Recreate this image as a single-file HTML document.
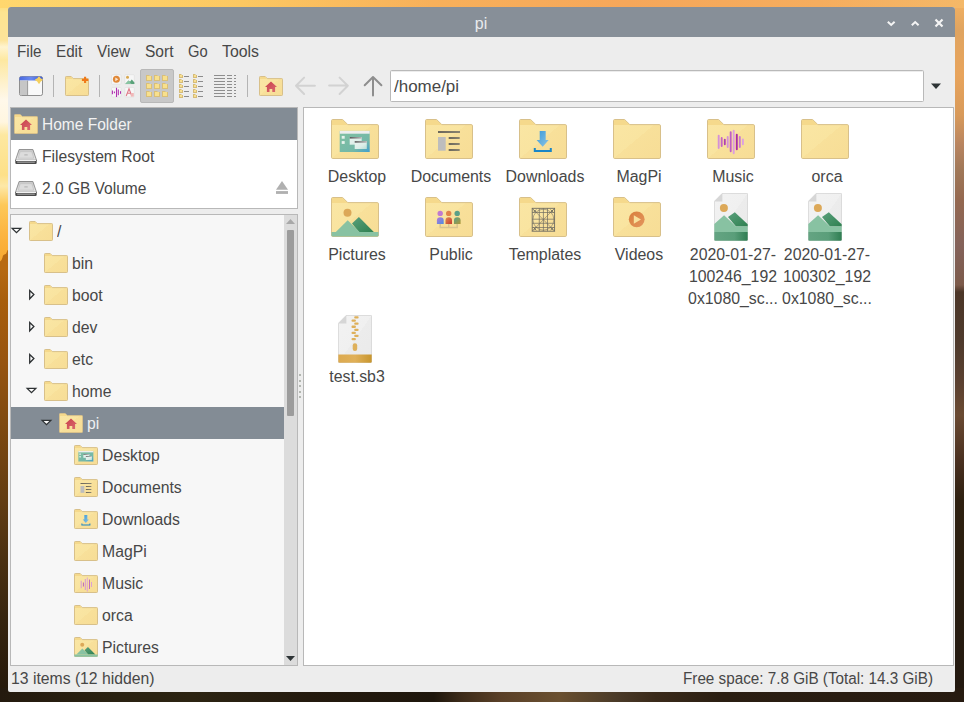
<!DOCTYPE html>
<html><head><meta charset="utf-8">
<style>
*{margin:0;padding:0;box-sizing:border-box}
html,body{width:964px;height:702px;overflow:hidden}
body{position:relative;font-family:"Liberation Sans",sans-serif;color:#2f2f2f;background:#2a1c0e}
.abs{position:absolute}
.t{position:absolute;white-space:nowrap;line-height:1}
svg{position:absolute;overflow:visible}

</style></head><body>
<svg width="0" height="0" style="position:absolute;left:0;top:0">
<defs>
<linearGradient id="gFold" x1="0" y1="0" x2="1" y2="1"><stop offset="0" stop-color="#fae6a4"/><stop offset="0.5" stop-color="#f9e4a0"/><stop offset="0.5" stop-color="#f8e09a"/><stop offset="1" stop-color="#f7dd96"/></linearGradient>
<linearGradient id="gTeal" x1="0" y1="0" x2="1" y2="1"><stop offset="0" stop-color="#80c0a2"/><stop offset="0.7" stop-color="#74b8a8"/><stop offset="1" stop-color="#3f9ed0"/></linearGradient>
<linearGradient id="gWin" x1="0" y1="0" x2="1" y2="1"><stop offset="0" stop-color="#eaf4f0"/><stop offset="0.6" stop-color="#dceee8"/><stop offset="1" stop-color="#b8dcd4"/></linearGradient>
<linearGradient id="gBar" x1="0" y1="0" x2="1" y2="0"><stop offset="0" stop-color="#5a5a5a"/><stop offset="1" stop-color="#b8b8b8"/></linearGradient>
<linearGradient id="gDocLine" x1="0" y1="0" x2="1" y2="0"><stop offset="0" stop-color="#6a665a"/><stop offset="1" stop-color="#8a8470"/></linearGradient>
<linearGradient id="gArrow" x1="0" y1="0" x2="1" y2="1"><stop offset="0" stop-color="#3c9ad8"/><stop offset="1" stop-color="#8cc4e4"/></linearGradient>
<linearGradient id="gP1" x1="0" y1="0" x2="1" y2="1"><stop offset="0" stop-color="#b878d8"/><stop offset="1" stop-color="#4a8ee0"/></linearGradient>
<linearGradient id="gP2" x1="0" y1="0" x2="1" y2="1"><stop offset="0" stop-color="#e08a50"/><stop offset="1" stop-color="#c83a30"/></linearGradient>
<linearGradient id="gP3" x1="0" y1="0" x2="1" y2="1"><stop offset="0" stop-color="#58a088"/><stop offset="1" stop-color="#b09838"/></linearGradient>
<linearGradient id="gVid" x1="0" y1="0" x2="1" y2="1"><stop offset="0" stop-color="#d87e3c"/><stop offset="1" stop-color="#e4965e"/></linearGradient>
<linearGradient id="gMtn" x1="0" y1="0" x2="1" y2="1"><stop offset="0" stop-color="#5aa07c"/><stop offset="1" stop-color="#2e8050"/></linearGradient>
<linearGradient id="gImgBand" x1="0" y1="0" x2="1" y2="0"><stop offset="0" stop-color="#64a482"/><stop offset="0.6" stop-color="#5a9e7a"/><stop offset="1" stop-color="#2f7e52"/></linearGradient>
<linearGradient id="gZipBand" x1="0" y1="0" x2="1" y2="0"><stop offset="0" stop-color="#dcaa50"/><stop offset="0.5" stop-color="#e0b058"/><stop offset="1" stop-color="#c8962e"/></linearGradient>
<linearGradient id="gPage" x1="0" y1="0" x2="1" y2="1"><stop offset="0" stop-color="#f2f2f2"/><stop offset="0.5" stop-color="#f0f0f0"/><stop offset="0.5" stop-color="#ececec"/><stop offset="1" stop-color="#eaeaea"/></linearGradient>
<linearGradient id="gHdr" x1="0" y1="0" x2="1" y2="0"><stop offset="0" stop-color="#4a6ae0"/><stop offset="0.5" stop-color="#6a8af0"/><stop offset="1" stop-color="#3c5cd8"/></linearGradient>
<linearGradient id="gHouse" x1="0" y1="0" x2="1" y2="1"><stop offset="0" stop-color="#c8404a"/><stop offset="1" stop-color="#dc6a70"/></linearGradient>
<linearGradient id="gDrvTop" x1="0" y1="0" x2="0" y2="1"><stop offset="0" stop-color="#c8c8c8"/><stop offset="1" stop-color="#e8e8e8"/></linearGradient>

<symbol id="folder" viewBox="0 0 48 40">
 <path d="M0.5,1.8 Q0.5,0.5 1.8,0.5 L11.6,0.5 L16.8,5.6 L46.2,5.6 Q47.5,5.6 47.5,6.9 L47.5,38.2 Q47.5,39.5 46.2,39.5 L1.8,39.5 Q0.5,39.5 0.5,38.2 Z" fill="url(#gFold)" stroke="#d8c08a" stroke-width="1"/>
 <path d="M1,1.8 Q1,1 1.8,1 L11.4,1 L16.5,6 L1,6 Z" fill="#f5d98c"/>
</symbol>
<symbol id="folderS" viewBox="0 0 24 20">
 <path d="M0.5,1.2 Q0.5,0.5 1.2,0.5 L6.2,0.5 L8.2,2.6 L22.8,2.6 Q23.5,2.6 23.5,3.3 L23.5,18.8 Q23.5,19.5 22.8,19.5 L1.2,19.5 Q0.5,19.5 0.5,18.8 Z" fill="url(#gFold)" stroke="#d8c08a" stroke-width="1"/>
 <path d="M1,1.2 Q1,1 1.2,1 L6,1 L8,3 L1,3 Z" fill="#f5d98c"/>
</symbol>

<symbol id="ovDesktop" viewBox="0 0 48 40">
 <rect x="8.7" y="11.9" width="30" height="21.1" fill="url(#gTeal)"/>
 <rect x="8.7" y="11.9" width="30" height="2.8" fill="#eeeeee"/>
 <rect x="10.7" y="16.9" width="3" height="2.8" fill="#e6f2ec"/>
 <rect x="10.7" y="22.1" width="3" height="2.8" fill="#e6f2ec"/>
 <rect x="18.7" y="18" width="12" height="7.7" fill="url(#gWin)"/>
 <rect x="18.7" y="18" width="12" height="1.6" fill="url(#gBar)"/>
 <rect x="23.7" y="22.1" width="12.1" height="7.9" fill="url(#gWin)"/>
 <rect x="23.7" y="22.1" width="12.1" height="1.6" fill="url(#gBar)"/>
</symbol>
<symbol id="ovDocuments" viewBox="0 0 48 40">
 <rect x="13" y="12" width="22" height="2" fill="url(#gDocLine)"/>
 <rect x="13" y="18" width="7.7" height="13.7" fill="#bdbdbd"/>
 <rect x="23.7" y="18" width="11" height="2" fill="url(#gDocLine)"/>
 <rect x="23.7" y="24" width="11" height="2" fill="url(#gDocLine)"/>
 <rect x="23.7" y="30" width="11" height="2" fill="url(#gDocLine)"/>
</symbol>
<symbol id="ovDownloads" viewBox="0 0 48 40">
 <path d="M20.7,11.9 H26.7 V21 H29.7 L23.7,27.8 L17.6,21 H20.7 Z" fill="url(#gArrow)"/>
 <path d="M14.8,29 H16.8 V31 H30.8 V29 H32.8 V33 H14.8 Z" fill="#1a86c6"/>
</symbol>
<symbol id="ovMusic" viewBox="0 0 48 40">
 <g stroke-width="1.9" stroke-linecap="round">
 <line x1="11.7" y1="16.8" x2="11.7" y2="29.1" stroke="#d490d8"/>
 <line x1="14.7" y1="19" x2="14.7" y2="27" stroke="#c464c4"/>
 <line x1="17.8" y1="20.8" x2="17.8" y2="25.3" stroke="#b040b0"/>
 <line x1="20.7" y1="18" x2="20.7" y2="28.1" stroke="#d490d8"/>
 <line x1="23.7" y1="13.1" x2="23.7" y2="32.3" stroke="#c060c4"/>
 <line x1="26.7" y1="11.8" x2="26.7" y2="34.2" stroke="#dc9ce0"/>
 <line x1="29.8" y1="15.8" x2="29.8" y2="30.2" stroke="#a82ca8"/>
 <line x1="32.8" y1="18" x2="32.8" y2="28.1" stroke="#c878d0"/>
 <line x1="35.9" y1="20.4" x2="35.9" y2="25.3" stroke="#dca0e0"/>
 </g>
</symbol>
<symbol id="ovMusicS" viewBox="0 0 24 20">
 <g stroke-width="0.9">
 <line x1="7.2" y1="7.8" x2="7.2" y2="15.2" stroke="#d494dc"/>
 <line x1="9.4" y1="9.5" x2="9.4" y2="13.5" stroke="#b454bc"/>
 <line x1="11.3" y1="6" x2="11.3" y2="17" stroke="#d090d8"/>
 <line x1="13.3" y1="4.5" x2="13.3" y2="18.5" stroke="#dc9ce0"/>
 <line x1="15.5" y1="6.5" x2="15.5" y2="16" stroke="#b860c0"/>
 <line x1="17.5" y1="9" x2="17.5" y2="14" stroke="#d898dc"/>
 </g>
</symbol>
<symbol id="ovPublic" viewBox="0 0 48 40">
 <path d="M15.2,26.5 V30.6 H32.2 V26.5 M23.7,26.5 V30.6" fill="none" stroke="#d9c490" stroke-width="1.5"/>
 <circle cx="15.2" cy="16.4" r="2.7" fill="#c07ad0"/>
 <circle cx="23.7" cy="16.4" r="2.7" fill="#e0844a"/>
 <circle cx="32.2" cy="16.4" r="2.7" fill="#5aa088"/>
 <path d="M11.9,27 V23.5 Q11.9,20.3 15.3,20.3 Q18.7,20.3 18.7,23.5 V27 Z" fill="url(#gP1)"/>
 <path d="M20.5,27 V23.5 Q20.5,20.3 23.75,20.3 Q27,20.3 27,23.5 V27 Z" fill="url(#gP2)"/>
 <path d="M29,27 V23.5 Q29,20.3 32.3,20.3 Q35.6,20.3 35.6,23.5 V27 Z" fill="url(#gP3)"/>
</symbol>
<symbol id="ovTemplates" viewBox="0 0 48 40">
 <g fill="none" stroke="#6e6b62" stroke-width="0.7">
 <rect x="13.2" y="11.3" width="22.4" height="22.9" stroke-width="0.9"/>
 <path d="M20.3,11.3 V34.2 M24.4,11.3 V34.2 M28.5,11.3 V34.2"/>
 <path d="M13.2,15.5 H35.6 M13.2,22.2 H35.6 M13.2,26.3 H35.6 M13.2,30.5 H35.6"/>
 <path d="M13.2,11.3 L35.6,34.2 M35.6,11.3 L13.2,34.2" stroke-width="0.55"/>
 <circle cx="24.4" cy="22.7" r="10.5" stroke-width="0.55"/>
 </g>
 <g stroke="#66645a" stroke-width="0.8"><path d="M14.3,12.5 L17.3,15.5 M17.3,12.5 L14.3,15.5 M31.5,12.5 L34.5,15.5 M34.5,12.5 L31.5,15.5 M14.3,30.3 L17.3,33.3 M17.3,30.3 L14.3,33.3 M31.5,30.3 L34.5,33.3 M34.5,30.3 L31.5,33.3"/></g>
</symbol>
<symbol id="ovVideos" viewBox="0 0 48 40">
 <circle cx="23.7" cy="22.3" r="7.9" fill="url(#gVid)"/>
 <path d="M20.8,18.2 L28,22.5 L20.8,26.8 Z" fill="#f8e09c"/>
</symbol>
<symbol id="ovPictures" viewBox="0 0 48 40">
 <circle cx="16.5" cy="15.7" r="4" fill="#dca858"/>
 <path d="M21,26.5 L27.9,20 L42.8,35 L28,35 Z" fill="url(#gMtn)"/>
 <path d="M4.8,35 L16.7,23.2 L28.6,35 Z" fill="#88c2a2"/>
 <path d="M0.5,35 H47.5 V38.2 Q47.5,39.5 46.2,39.5 H1.8 Q0.5,39.5 0.5,38.2 Z" fill="#88c2a2"/>
</symbol>
<symbol id="ovHouse" viewBox="0 0 24 20">
 <path d="M12,5.6 L18,10.9 H16.1 V16 H13.3 V13 H10.5 V16 H7.9 V10.9 H6 Z" fill="url(#gHouse)"/>
</symbol>

<symbol id="imgfile" viewBox="0 0 34 48">
 <path d="M8.4,0.3 H32.5 Q33.7,0.3 33.7,1.5 V46.5 Q33.7,47.7 32.5,47.7 H1.5 Q0.3,47.7 0.3,46.5 V8.4 Z" fill="url(#gPage)" stroke="#cacaca" stroke-width="0.7"/>
 <path d="M8.4,0.3 V8.4 H0.3 Z" fill="#d6d6d6"/>
 <circle cx="9.9" cy="15" r="4" fill="#dca858"/>
 <path d="M14,24 L20.8,19.2 L33.7,31.2 V33.5 H22 Z" fill="url(#gMtn)"/>
 <path d="M0.3,31 L10.1,22.2 L22,33.5 H33.7 V39 H0.3 Z" fill="#88c2a2"/>
 <path d="M0.3,38.9 H33.7 V46.5 Q33.7,47.7 32.5,47.7 H1.5 Q0.3,47.7 0.3,46.5 Z" fill="url(#gImgBand)"/>
</symbol>
<symbol id="zipfile" viewBox="0 0 34 48">
 <path d="M8.4,0.3 H32.5 Q33.7,0.3 33.7,1.5 V46.5 Q33.7,47.7 32.5,47.7 H1.5 Q0.3,47.7 0.3,46.5 V8.4 Z" fill="url(#gPage)" stroke="#cacaca" stroke-width="0.7"/>
 <path d="M8.4,0.3 V8.4 H0.3 Z" fill="#d6d6d6"/>
 <g fill="#deb05a"><rect x="16.2" y="1.3" width="4.4" height="2.3" rx="1"/><rect x="13.5" y="4.4" width="4.4" height="2.3" rx="1"/><rect x="16.2" y="7.5" width="4.4" height="2.3" rx="1"/><rect x="13.5" y="10.6" width="4.4" height="2.3" rx="1"/><rect x="16.2" y="13.7" width="4.4" height="2.3" rx="1"/><rect x="13.5" y="16.7" width="4.4" height="2.3" rx="1"/><rect x="16.2" y="19.8" width="4.4" height="2.3" rx="1"/><rect x="13.5" y="22.9" width="4.4" height="2.3" rx="1"/><rect x="14.7" y="28.2" width="4.5" height="7.7" rx="2.2"/></g>
 <path d="M0.3,39.4 H33.7 V46.5 Q33.7,47.7 32.5,47.7 H1.5 Q0.3,47.7 0.3,46.5 Z" fill="url(#gZipBand)"/>
</symbol>
<symbol id="drive" viewBox="0 0 22 15">
 <path d="M4.1,0.5 H17.9 L21.5,11.2 H0.5 Z" fill="url(#gDrvTop)" stroke="#808080" stroke-width="0.8"/>
 <path d="M5.2,2.6 H16.8 L18.8,9.2 H3.2 Z" fill="#dcdcdc" stroke="#bcbcbc" stroke-width="0.6"/>
 <rect x="9.3" y="5.4" width="3.4" height="1" fill="#b0b0b0"/>
 <path d="M0.3,11 H21.7 V13.8 Q21.7,15 20.5,15 H1.5 Q0.3,15 0.3,13.8 Z" fill="#4a4a4a"/>
 <rect x="1" y="11" width="20" height="1" fill="#f2f2f2"/>
 <rect x="2.2" y="12.6" width="17.6" height="1.1" fill="#a8a8a8"/>
</symbol>
</defs></svg>
<div class="abs" style="left:0;top:0;width:12px;height:702px;background:linear-gradient(to bottom,#fdd46a 0px,#fde490 12px,#fde49a 40px,#fff4d0 47px,#fde8a0 60px,#fef2d0 85px,#fff8ea 100px,#fff6e0 122px,#fde8a0 135px,#fde088 175px,#fde8a8 186px,#fdc858 205px,#fcb440 235px,#f8a830 262px,#b86a12 263px,#a85e0c 300px,#985410 360px,#804a10 420px,#623c12 500px,#4a3010 560px,#36240e 620px,#2a1c0c 670px,#22180a 702px)"></div>
<svg style="left:0;top:240px" width="9" height="30" viewBox="0 0 9 30"><path d="M9,9.5 Q7,9.5 6.8,12 Q6.5,14 4.5,14.5 Q2.5,15 2.5,17.5 Q2,20 0,21.5 V30 H9 Z" fill="#b86a12"/></svg>
<div class="abs" style="left:952px;top:0;width:12px;height:702px;background:linear-gradient(to bottom,#f4b262 0px,#e0a460 30px,#e8a45c 75px,#d89a5a 115px,#b88460 145px,#a07858 170px,#946850 200px,#84625a 245px,#7c5a4a 285px,#4c3628 292px,#4e3a2c 340px,#5a4030 380px,#6a4a32 415px,#4a3020 460px,#2e2010 500px,#2a1e10 560px,#221810 702px)"></div>
<div class="abs" style="left:0;top:688px;width:964px;height:14px;background:linear-gradient(to right,#241a0e 0%,#2a2212 12%,#2c2412 20%,#241a0e 32%,#1e160c 45%,#3e2c1a 48%,#5a4028 52%,#6a5030 58%,#4a3a28 64%,#3a2a1a 68%,#2a1e12 75%,#261a10 100%)"></div>
<div class="abs" style="left:0;top:0;width:964px;height:8px;background:linear-gradient(to right,#ffd76e 0%,#fcc862 25%,#f8b05a 45%,#f6a75a 65%,#f6ad5e 85%,#f4b868 100%)"></div>
<div class="abs" style="left:8px;top:7px;width:947px;height:685px;background:#ededed;border-radius:3px 3px 2px 2px"></div>
<div class="abs" style="left:8px;top:7px;width:947px;height:30px;background:#878f98;border-radius:3px 3px 0 0"></div>
<div class="t" style="left:281.00px;width:400px;text-align:center;top:16.26px;font-size:16px;color:#e8eaed;transform:scaleX(1.0);transform-origin:50% 0;">pi</div>
<svg style="left:884px;top:17px" width="64" height="14">
<path d="M3.8,4.8 L7.2,8 L10.6,4.8" fill="none" stroke="#f4f4f4" stroke-width="2"/>
<path d="M27.8,8.2 L31.2,5 L34.6,8.2" fill="none" stroke="#f4f4f4" stroke-width="2"/>
<path d="M51.5,2.5 L58.5,9.5 M58.5,2.5 L51.5,9.5" fill="none" stroke="#f4f4f4" stroke-width="2.2"/>
</svg>
<div class="t" style="left:17.20px;top:44.36px;font-size:16px;color:#474747;transform:scaleX(0.95);transform-origin:0 0;">File</div>
<div class="t" style="left:56.20px;top:44.36px;font-size:16px;color:#474747;transform:scaleX(0.95);transform-origin:0 0;">Edit</div>
<div class="t" style="left:96.70px;top:44.36px;font-size:16px;color:#474747;transform:scaleX(0.96);transform-origin:0 0;">View</div>
<div class="t" style="left:144.70px;top:44.36px;font-size:16px;color:#474747;transform:scaleX(0.97);transform-origin:0 0;">Sort</div>
<div class="t" style="left:188.00px;top:44.36px;font-size:16px;color:#474747;transform:scaleX(0.92);transform-origin:0 0;">Go</div>
<div class="t" style="left:221.70px;top:44.36px;font-size:16px;color:#474747;transform:scaleX(0.99);transform-origin:0 0;">Tools</div>
<div class="abs" style="left:53px;top:75px;width:1px;height:22px;background:#b4b4b4"></div>
<div class="abs" style="left:99px;top:75px;width:1px;height:22px;background:#b4b4b4"></div>
<div class="abs" style="left:247px;top:75px;width:1px;height:22px;background:#b4b4b4"></div>
<div class="abs" style="left:140px;top:69px;width:34px;height:34px;background:#c8c8c8;border:1px solid #b8b8b8;border-radius:2px"></div>

<svg style="left:19px;top:76px" width="24" height="20" viewBox="0 0 24 20">
 <rect x="0.5" y="0.5" width="23" height="19" rx="1.8" fill="#f9f9f9" stroke="#8e8e8e" stroke-width="1"/>
 <path d="M0.5,4.6 V2.3 Q0.5,0.5 2.3,0.5 H21.7 Q23.5,0.5 23.5,2.3 V4.6 Z" fill="url(#gHdr)"/>
 <rect x="1" y="4.6" width="7.4" height="14.4" fill="#c6c6c6"/>
 <line x1="8.6" y1="4.6" x2="8.6" y2="19" stroke="#8e8e8e" stroke-width="0.9"/>
 <path d="M20,1.2 Q20.7,3.2 23.2,3.9 Q20.7,4.6 20,7 Q19.3,4.6 16.7,3.9 Q19.3,3.2 20,1.2 Z" fill="#f4d060" stroke="#f4d060" stroke-width="1.5" stroke-linejoin="round"/>
</svg>
<svg style="left:65px;top:76px" width="24" height="20"><use href="#folderS" width="24" height="20"/></svg>
<svg style="left:65px;top:76px" width="24" height="20" viewBox="0 0 24 20">
 <path d="M20.1,0.7 V7.1 M16.9,3.9 H23.3" stroke="#f07818" stroke-width="2.1"/>
</svg>
<svg style="left:111px;top:74px" width="24" height="24" viewBox="0 0 24 24">
 <rect x="0.5" y="0.7" width="9.6" height="9.6" rx="1" fill="#f6f6f6" stroke="#e2e2e2" stroke-width="0.8"/>
 <rect x="13.8" y="0.7" width="9.6" height="9.6" rx="1" fill="#f6f6f6" stroke="#e2e2e2" stroke-width="0.8"/>
 <rect x="0.5" y="13.4" width="9.6" height="9.6" rx="1" fill="#f6f6f6" stroke="#e2e2e2" stroke-width="0.8"/>
 <rect x="13.8" y="13.4" width="9.6" height="9.6" rx="1" fill="#f6f6f6" stroke="#e2e2e2" stroke-width="0.8"/>
 <circle cx="5.4" cy="5.3" r="3.5" fill="#e08838"/>
 <path d="M4.3,3.4 L7.3,5.3 L4.3,7.2 Z" fill="#f8e8d8"/>
 <circle cx="16.5" cy="3.3" r="1.5" fill="#d8a850"/>
 <path d="M14.3,10 L17.5,6.5 L19,7.8 L20.8,5.6 L23.4,8.5 V10 Z" fill="#5aa27a"/>
 <path d="M14.3,10 L17.5,6.5 L20.5,10 Z" fill="#88c4a2"/>
 <g stroke="#b030b0" stroke-width="1.1">
  <line x1="1.4" y1="16.5" x2="1.4" y2="20.2"/><line x1="3.4" y1="17.6" x2="3.4" y2="19.2"/>
  <line x1="5.5" y1="13.8" x2="5.5" y2="23"/><line x1="7.3" y1="15.5" x2="7.3" y2="21.2"/><line x1="9.5" y1="17.2" x2="9.5" y2="19.8"/>
 </g>
 <path d="M15.2,22 L18,14.8 L20.8,22 M16.3,19.2 H19.7" fill="none" stroke="#e07a88" stroke-width="1.1"/>
 <rect x="19.8" y="19" width="3" height="3.6" fill="#f0b8b8"/>
</svg>
<svg style="left:0;top:0" width="964" height="702" viewBox="0 0 964 702"><path d="M146,75 H149 L150,76 H152 V81 H146 Z" fill="#d9bf78"/><rect x="147" y="76" width="4" height="4" fill="#f8e08c"/><path d="M154,75 H157 L158,76 H160 V81 H154 Z" fill="#d9bf78"/><rect x="155" y="76" width="4" height="4" fill="#f8e08c"/><path d="M162,75 H165 L166,76 H168 V81 H162 Z" fill="#d9bf78"/><rect x="163" y="76" width="4" height="4" fill="#f8e08c"/><path d="M146,83 H149 L150,84 H152 V89 H146 Z" fill="#d9bf78"/><rect x="147" y="84" width="4" height="4" fill="#f8e08c"/><path d="M154,83 H157 L158,84 H160 V89 H154 Z" fill="#d9bf78"/><rect x="155" y="84" width="4" height="4" fill="#f8e08c"/><path d="M162,83 H165 L166,84 H168 V89 H162 Z" fill="#d9bf78"/><rect x="163" y="84" width="4" height="4" fill="#f8e08c"/><path d="M146,91 H149 L150,92 H152 V97 H146 Z" fill="#d9bf78"/><rect x="147" y="92" width="4" height="4" fill="#f8e08c"/><path d="M154,91 H157 L158,92 H160 V97 H154 Z" fill="#d9bf78"/><rect x="155" y="92" width="4" height="4" fill="#f8e08c"/><path d="M162,91 H165 L166,92 H168 V97 H162 Z" fill="#d9bf78"/><rect x="163" y="92" width="4" height="4" fill="#f8e08c"/><path d="M179,74 H181 L182,75 H183 V78 H179 Z" fill="#d6bb78"/><rect x="180" y="75" width="2" height="2" fill="#f8e090"/><rect x="184" y="76" width="5" height="1" fill="#8c8c8c"/><path d="M193,74 H195 L196,75 H197 V78 H193 Z" fill="#d6bb78"/><rect x="194" y="75" width="2" height="2" fill="#f8e090"/><rect x="198" y="76" width="5" height="1" fill="#8c8c8c"/><path d="M179,79 H181 L182,80 H183 V83 H179 Z" fill="#d6bb78"/><rect x="180" y="80" width="2" height="2" fill="#f8e090"/><rect x="184" y="81" width="5" height="1" fill="#8c8c8c"/><path d="M193,79 H195 L196,80 H197 V83 H193 Z" fill="#d6bb78"/><rect x="194" y="80" width="2" height="2" fill="#f8e090"/><rect x="198" y="81" width="5" height="1" fill="#8c8c8c"/><path d="M179,84 H181 L182,85 H183 V88 H179 Z" fill="#d6bb78"/><rect x="180" y="85" width="2" height="2" fill="#f8e090"/><rect x="184" y="86" width="5" height="1" fill="#8c8c8c"/><path d="M193,84 H195 L196,85 H197 V88 H193 Z" fill="#d6bb78"/><rect x="194" y="85" width="2" height="2" fill="#f8e090"/><rect x="198" y="86" width="5" height="1" fill="#8c8c8c"/><path d="M179,89 H181 L182,90 H183 V93 H179 Z" fill="#d6bb78"/><rect x="180" y="90" width="2" height="2" fill="#f8e090"/><rect x="184" y="91" width="5" height="1" fill="#8c8c8c"/><path d="M193,89 H195 L196,90 H197 V93 H193 Z" fill="#d6bb78"/><rect x="194" y="90" width="2" height="2" fill="#f8e090"/><rect x="198" y="91" width="5" height="1" fill="#8c8c8c"/><path d="M179,94 H181 L182,95 H183 V98 H179 Z" fill="#d6bb78"/><rect x="180" y="95" width="2" height="2" fill="#f8e090"/><rect x="184" y="96" width="5" height="1" fill="#8c8c8c"/><path d="M193,94 H195 L196,95 H197 V98 H193 Z" fill="#d6bb78"/><rect x="194" y="95" width="2" height="2" fill="#f8e090"/><rect x="198" y="96" width="5" height="1" fill="#8c8c8c"/><rect x="214" y="75" width="11" height="1" fill="#8e8e8e"/><rect x="227" y="75" width="5" height="1" fill="#8e8e8e"/><rect x="234" y="75" width="2" height="1" fill="#8e8e8e"/><rect x="214" y="78" width="11" height="1" fill="#8e8e8e"/><rect x="227" y="78" width="5" height="1" fill="#8e8e8e"/><rect x="234" y="78" width="2" height="1" fill="#8e8e8e"/><rect x="214" y="81" width="11" height="1" fill="#8e8e8e"/><rect x="227" y="81" width="5" height="1" fill="#8e8e8e"/><rect x="234" y="81" width="2" height="1" fill="#8e8e8e"/><rect x="214" y="84" width="11" height="1" fill="#8e8e8e"/><rect x="227" y="84" width="5" height="1" fill="#8e8e8e"/><rect x="234" y="84" width="2" height="1" fill="#8e8e8e"/><rect x="214" y="87" width="11" height="1" fill="#8e8e8e"/><rect x="227" y="87" width="5" height="1" fill="#8e8e8e"/><rect x="234" y="87" width="2" height="1" fill="#8e8e8e"/><rect x="214" y="90" width="11" height="1" fill="#8e8e8e"/><rect x="227" y="90" width="5" height="1" fill="#8e8e8e"/><rect x="234" y="90" width="2" height="1" fill="#8e8e8e"/><rect x="214" y="93" width="11" height="1" fill="#8e8e8e"/><rect x="227" y="93" width="5" height="1" fill="#8e8e8e"/><rect x="234" y="93" width="2" height="1" fill="#8e8e8e"/><rect x="214" y="96" width="11" height="1" fill="#8e8e8e"/><rect x="227" y="96" width="5" height="1" fill="#8e8e8e"/><rect x="234" y="96" width="2" height="1" fill="#8e8e8e"/></svg>

<svg style="left:259px;top:76px" width="24" height="20"><use href="#folderS" width="24" height="20"/><use href="#ovHouse" width="24" height="20"/></svg>
<svg style="left:290px;top:72px" width="100" height="28" viewBox="290 72 100 28">
 <path d="M314.9,85.8 H296.2 M304.1,77.6 L296,85.8 L304.1,94" fill="none" stroke="#d2d2d2" stroke-width="2" stroke-linecap="round" stroke-linejoin="round"/>
 <path d="M329.1,85.6 H347.8 M339.6,77.6 L347.8,85.8 L339.6,94" fill="none" stroke="#d2d2d2" stroke-width="2" stroke-linecap="round" stroke-linejoin="round"/>
 <path d="M373,95.6 V77.2 M364.7,85.3 L373,77 L381.4,85.3" fill="none" stroke="#8e8e8e" stroke-width="2" stroke-linecap="round" stroke-linejoin="round"/>
</svg>

<div class="abs" style="left:390px;top:70px;width:534px;height:32px;background:#fff;border:1px solid #b9b9b9;border-radius:1.5px;box-shadow:inset 0 1px 0 #ececec"></div>
<div class="t" style="left:394.00px;top:78.96px;font-size:16px;color:#474747;transform:scaleX(1.06);transform-origin:0 0;">/home/pi</div>
<svg style="left:930px;top:83px" width="12" height="7"><path d="M1,0.5 L11,0.5 L6,6 Z" fill="#2e3436"/></svg>
<div class="abs" style="left:10px;top:107px;width:288px;height:102px;background:#fff;border:1px solid #b8b8b8"></div>
<div class="abs" style="left:11px;top:108px;width:286px;height:32px;background:#838c95"></div>
<svg style="left:14px;top:114px" width="24" height="20"><use href="#folderS" width="24" height="20"/></svg>
<svg style="left:14px;top:114px" width="24" height="20"><use href="#ovHouse" width="24" height="20"/></svg>
<svg style="left:15px;top:149px" width="22" height="15"><use href="#drive" width="22" height="15"/></svg>
<svg style="left:15px;top:181px" width="22" height="15"><use href="#drive" width="22" height="15"/></svg>
<svg style="left:275px;top:180px" width="14" height="14" viewBox="0 0 14 14"><path d="M7,1 L13,9.7 H1 Z" fill="#b0b0b0"/><rect x="1" y="11.1" width="12" height="2.8" fill="#b0b0b0"/></svg>
<div class="t" style="left:41.60px;top:117.26px;font-size:16px;color:#f2f2f2;transform:scaleX(0.97);transform-origin:0 0;">Home Folder</div>
<div class="t" style="left:41.60px;top:149.16px;font-size:16px;color:#474747;transform:scaleX(0.98);transform-origin:0 0;">Filesystem Root</div>
<div class="t" style="left:41.60px;top:180.86px;font-size:16px;color:#474747;transform:scaleX(0.97);transform-origin:0 0;">2.0 GB Volume</div>
<div class="abs" style="left:10px;top:214px;width:288px;height:452px;background:#f7f7f7;border:1px solid #b8b8b8"></div>
<div class="abs" style="left:284px;top:215px;width:13px;height:450px;background:#dcdcdc"></div>
<div class="abs" style="left:287px;top:230px;width:7px;height:186px;background:#9c9c9c;border-radius:1px"></div>
<svg style="left:285px;top:218px" width="11" height="7"><path d="M1,6 L10,6 L5.5,1 Z" fill="#a8a8a8"/></svg>
<svg style="left:285px;top:655px" width="11" height="7"><path d="M1,1 L10,1 L5.5,6 Z" fill="#2e3436"/></svg>
<div class="abs" style="left:11px;top:407px;width:273px;height:32px;background:#838c95"></div>
<svg style="left:29px;top:221px" width="24" height="20"><use href="#folderS" width="24" height="20"/></svg>
<div class="t" style="left:56.50px;top:224.06px;font-size:16px;color:#474747;transform:scaleX(0.985);transform-origin:0 0;">/</div>
<svg style="left:0;top:0" width="964" height="702" viewBox="0 0 964 702"><path d="M12.20,228.40 L20.80,228.40 L16.50,232.70 Z" fill="#ffffff" stroke="#2e3234" stroke-width="1.3" stroke-linejoin="miter"/></svg>
<svg style="left:44px;top:253px" width="24" height="20"><use href="#folderS" width="24" height="20"/></svg>
<div class="t" style="left:71.50px;top:256.06px;font-size:16px;color:#474747;transform:scaleX(0.985);transform-origin:0 0;">bin</div>
<svg style="left:44px;top:285px" width="24" height="20"><use href="#folderS" width="24" height="20"/></svg>
<div class="t" style="left:71.50px;top:288.06px;font-size:16px;color:#474747;transform:scaleX(0.985);transform-origin:0 0;">boot</div>
<svg style="left:0;top:0" width="964" height="702" viewBox="0 0 964 702"><path d="M29.70,290.50 L33.90,294.50 L29.70,298.80 Z" fill="#ffffff" stroke="#2e3234" stroke-width="1.3" stroke-linejoin="miter"/></svg>
<svg style="left:44px;top:317px" width="24" height="20"><use href="#folderS" width="24" height="20"/></svg>
<div class="t" style="left:71.50px;top:320.06px;font-size:16px;color:#474747;transform:scaleX(0.985);transform-origin:0 0;">dev</div>
<svg style="left:0;top:0" width="964" height="702" viewBox="0 0 964 702"><path d="M29.70,322.50 L33.90,326.50 L29.70,330.80 Z" fill="#ffffff" stroke="#2e3234" stroke-width="1.3" stroke-linejoin="miter"/></svg>
<svg style="left:44px;top:349px" width="24" height="20"><use href="#folderS" width="24" height="20"/></svg>
<div class="t" style="left:71.50px;top:352.06px;font-size:16px;color:#474747;transform:scaleX(0.985);transform-origin:0 0;">etc</div>
<svg style="left:0;top:0" width="964" height="702" viewBox="0 0 964 702"><path d="M29.70,354.50 L33.90,358.50 L29.70,362.80 Z" fill="#ffffff" stroke="#2e3234" stroke-width="1.3" stroke-linejoin="miter"/></svg>
<svg style="left:44px;top:381px" width="24" height="20"><use href="#folderS" width="24" height="20"/></svg>
<div class="t" style="left:71.50px;top:384.06px;font-size:16px;color:#474747;transform:scaleX(0.985);transform-origin:0 0;">home</div>
<svg style="left:0;top:0" width="964" height="702" viewBox="0 0 964 702"><path d="M27.20,388.40 L35.80,388.40 L31.50,392.70 Z" fill="#ffffff" stroke="#2e3234" stroke-width="1.3" stroke-linejoin="miter"/></svg>
<svg style="left:59px;top:413px" width="24" height="20"><use href="#folderS" width="24" height="20"/></svg>
<svg style="left:59px;top:413px" width="24" height="20"><use href="#ovHouse" width="24" height="20"/></svg>
<div class="t" style="left:86.50px;top:416.06px;font-size:16px;color:#eef0f2;transform:scaleX(0.985);transform-origin:0 0;">pi</div>
<svg style="left:0;top:0" width="964" height="702" viewBox="0 0 964 702"><path d="M42.20,420.40 L50.80,420.40 L46.50,424.70 Z" fill="#ffffff" stroke="#2e3234" stroke-width="1.3" stroke-linejoin="miter"/></svg>
<svg style="left:74px;top:445px" width="24" height="20"><use href="#folderS" width="24" height="20"/></svg>
<svg style="left:74px;top:445px" width="24" height="20"><use href="#ovDesktop" width="24" height="20"/></svg>
<div class="t" style="left:101.50px;top:448.06px;font-size:16px;color:#474747;transform:scaleX(0.985);transform-origin:0 0;">Desktop</div>
<svg style="left:74px;top:477px" width="24" height="20"><use href="#folderS" width="24" height="20"/></svg>
<svg style="left:74px;top:477px" width="24" height="20"><use href="#ovDocuments" width="24" height="20"/></svg>
<div class="t" style="left:101.50px;top:480.06px;font-size:16px;color:#474747;transform:scaleX(0.985);transform-origin:0 0;">Documents</div>
<svg style="left:74px;top:509px" width="24" height="20"><use href="#folderS" width="24" height="20"/></svg>
<svg style="left:74px;top:509px" width="24" height="20"><use href="#ovDownloads" width="24" height="20"/></svg>
<div class="t" style="left:101.50px;top:512.06px;font-size:16px;color:#474747;transform:scaleX(0.985);transform-origin:0 0;">Downloads</div>
<svg style="left:74px;top:541px" width="24" height="20"><use href="#folderS" width="24" height="20"/></svg>
<div class="t" style="left:101.50px;top:544.06px;font-size:16px;color:#474747;transform:scaleX(0.985);transform-origin:0 0;">MagPi</div>
<svg style="left:74px;top:573px" width="24" height="20"><use href="#folderS" width="24" height="20"/></svg>
<svg style="left:74px;top:573px" width="24" height="20"><use href="#ovMusicS" width="24" height="20"/></svg>
<div class="t" style="left:101.50px;top:576.06px;font-size:16px;color:#474747;transform:scaleX(0.985);transform-origin:0 0;">Music</div>
<svg style="left:74px;top:605px" width="24" height="20"><use href="#folderS" width="24" height="20"/></svg>
<div class="t" style="left:101.50px;top:608.06px;font-size:16px;color:#474747;transform:scaleX(0.985);transform-origin:0 0;">orca</div>
<svg style="left:74px;top:637px" width="24" height="20"><use href="#folderS" width="24" height="20"/></svg>
<svg style="left:74px;top:637px" width="24" height="20"><use href="#ovPictures" width="24" height="20"/></svg>
<div class="t" style="left:101.50px;top:640.06px;font-size:16px;color:#474747;transform:scaleX(0.985);transform-origin:0 0;">Pictures</div>
<div class="abs" style="left:299px;top:374.0px;width:2px;height:2px;background:#b2b6b0"></div>
<div class="abs" style="left:299px;top:379.5px;width:2px;height:2px;background:#b2b6b0"></div>
<div class="abs" style="left:299px;top:385.0px;width:2px;height:2px;background:#b2b6b0"></div>
<div class="abs" style="left:299px;top:390.5px;width:2px;height:2px;background:#b2b6b0"></div>
<div class="abs" style="left:299px;top:396.0px;width:2px;height:2px;background:#b2b6b0"></div>
<div class="abs" style="left:303px;top:107px;width:651px;height:559px;background:#fff;border:1px solid #b8b8b8"></div>
<svg style="left:331px;top:119px" width="48" height="40"><use href="#folder" width="48" height="40"/></svg>
<svg style="left:331px;top:119px" width="48" height="40"><use href="#ovDesktop" width="48" height="40"/></svg>
<div class="t" style="left:157.30px;width:400px;text-align:center;top:169.46px;font-size:16px;color:#474747;transform:scaleX(0.995);transform-origin:50% 0;">Desktop</div>
<svg style="left:425px;top:119px" width="48" height="40"><use href="#folder" width="48" height="40"/></svg>
<svg style="left:425px;top:119px" width="48" height="40"><use href="#ovDocuments" width="48" height="40"/></svg>
<div class="t" style="left:251.30px;width:400px;text-align:center;top:169.46px;font-size:16px;color:#474747;transform:scaleX(0.995);transform-origin:50% 0;">Documents</div>
<svg style="left:519px;top:119px" width="48" height="40"><use href="#folder" width="48" height="40"/></svg>
<svg style="left:519px;top:119px" width="48" height="40"><use href="#ovDownloads" width="48" height="40"/></svg>
<div class="t" style="left:345.30px;width:400px;text-align:center;top:169.46px;font-size:16px;color:#474747;transform:scaleX(0.995);transform-origin:50% 0;">Downloads</div>
<svg style="left:613px;top:119px" width="48" height="40"><use href="#folder" width="48" height="40"/></svg>
<div class="t" style="left:439.30px;width:400px;text-align:center;top:169.46px;font-size:16px;color:#474747;transform:scaleX(0.995);transform-origin:50% 0;">MagPi</div>
<svg style="left:707px;top:119px" width="48" height="40"><use href="#folder" width="48" height="40"/></svg>
<svg style="left:707px;top:119px" width="48" height="40"><use href="#ovMusic" width="48" height="40"/></svg>
<div class="t" style="left:533.30px;width:400px;text-align:center;top:169.46px;font-size:16px;color:#474747;transform:scaleX(0.995);transform-origin:50% 0;">Music</div>
<svg style="left:801px;top:119px" width="48" height="40"><use href="#folder" width="48" height="40"/></svg>
<div class="t" style="left:627.30px;width:400px;text-align:center;top:169.46px;font-size:16px;color:#474747;transform:scaleX(0.995);transform-origin:50% 0;">orca</div>
<svg style="left:331px;top:197px" width="48" height="40"><use href="#folder" width="48" height="40"/></svg>
<svg style="left:331px;top:197px" width="48" height="40"><use href="#ovPictures" width="48" height="40"/></svg>
<div class="t" style="left:157.30px;width:400px;text-align:center;top:247.46px;font-size:16px;color:#474747;transform:scaleX(0.995);transform-origin:50% 0;">Pictures</div>
<svg style="left:425px;top:197px" width="48" height="40"><use href="#folder" width="48" height="40"/></svg>
<svg style="left:425px;top:197px" width="48" height="40"><use href="#ovPublic" width="48" height="40"/></svg>
<div class="t" style="left:251.30px;width:400px;text-align:center;top:247.46px;font-size:16px;color:#474747;transform:scaleX(0.995);transform-origin:50% 0;">Public</div>
<svg style="left:519px;top:197px" width="48" height="40"><use href="#folder" width="48" height="40"/></svg>
<svg style="left:519px;top:197px" width="48" height="40"><use href="#ovTemplates" width="48" height="40"/></svg>
<div class="t" style="left:345.30px;width:400px;text-align:center;top:247.46px;font-size:16px;color:#474747;transform:scaleX(0.995);transform-origin:50% 0;">Templates</div>
<svg style="left:613px;top:197px" width="48" height="40"><use href="#folder" width="48" height="40"/></svg>
<svg style="left:613px;top:197px" width="48" height="40"><use href="#ovVideos" width="48" height="40"/></svg>
<div class="t" style="left:439.30px;width:400px;text-align:center;top:247.46px;font-size:16px;color:#474747;transform:scaleX(0.995);transform-origin:50% 0;">Videos</div>
<svg style="left:714px;top:193px" width="34" height="48"><use href="#imgfile" width="34" height="48"/></svg>
<svg style="left:808px;top:193px" width="34" height="48"><use href="#imgfile" width="34" height="48"/></svg>
<svg style="left:338px;top:315px" width="34" height="48"><use href="#zipfile" width="34" height="48"/></svg>
<div class="t" style="left:533.30px;width:400px;text-align:center;top:247.06px;font-size:16px;color:#474747;transform:scaleX(0.99);transform-origin:50% 0;">2020-01-27-</div>
<div class="t" style="left:533.30px;width:400px;text-align:center;top:269.06px;font-size:16px;color:#474747;transform:scaleX(0.99);transform-origin:50% 0;">100246_192</div>
<div class="t" style="left:533.30px;width:400px;text-align:center;top:290.86px;font-size:16px;color:#474747;transform:scaleX(0.99);transform-origin:50% 0;">0x1080_sc...</div>
<div class="t" style="left:627.30px;width:400px;text-align:center;top:247.06px;font-size:16px;color:#474747;transform:scaleX(0.99);transform-origin:50% 0;">2020-01-27-</div>
<div class="t" style="left:627.30px;width:400px;text-align:center;top:269.06px;font-size:16px;color:#474747;transform:scaleX(0.99);transform-origin:50% 0;">100302_192</div>
<div class="t" style="left:627.30px;width:400px;text-align:center;top:290.86px;font-size:16px;color:#474747;transform:scaleX(0.99);transform-origin:50% 0;">0x1080_sc...</div>
<div class="t" style="left:157.00px;width:400px;text-align:center;top:368.76px;font-size:16px;color:#474747;transform:scaleX(0.99);transform-origin:50% 0;">test.sb3</div>
<div class="t" style="left:10.65px;top:670.66px;font-size:16px;color:#474747;transform:scaleX(0.984);transform-origin:0 0;">13 items (12 hidden)</div>
<div class="t" style="left:683.40px;top:670.66px;font-size:16px;color:#474747;transform:scaleX(0.953);transform-origin:0 0;">Free space: 7.8 GiB (Total: 14.3 GiB)</div>
</body></html>
